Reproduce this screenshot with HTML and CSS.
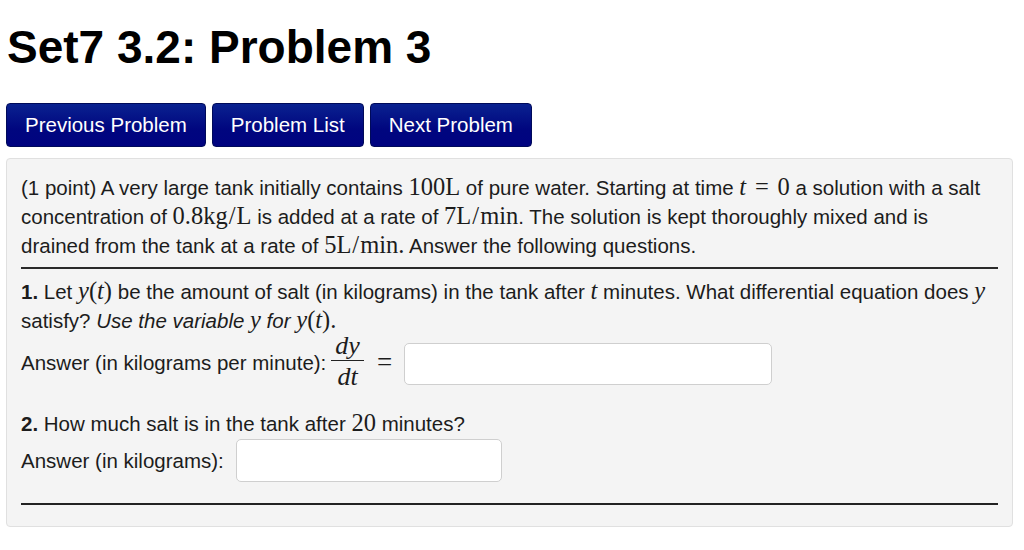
FILE: index.html
```html
<!DOCTYPE html>
<html lang="en">
<head>
<meta charset="utf-8">
<title>Set7 3.2: Problem 3</title>
<link rel="stylesheet" href="styles.css">
</head>
<body>
<div class="page">
  <h1 class="title">Set7 3.2: Problem 3</h1>
  <nav class="nav">
    <a class="btn" href="#">Previous Problem</a>
    <a class="btn" href="#">Problem List</a>
    <a class="btn" href="#">Next Problem</a>
  </nav>
  <div class="problem">
    <p class="intro">(1 point) A very large tank initially contains <span class="m">100L</span> of pure water. Starting at time <span class="m"><i>t</i><span class="rel">=</span>0</span> a solution with a salt concentration of <span class="m">0.8kg<span class="sl">/</span>L</span> is added at a rate of <span class="m">7L<span class="sl">/</span>min</span>. The solution is kept thoroughly mixed and is drained from the tank at a rate of <span class="m">5L<span class="sl">/</span>min.</span> Answer the following questions.</p>
    <hr class="rule">
    <p class="q"><b>1.</b> Let <span class="m"><i>y</i>(<i>t</i>)</span> be the amount of salt (in kilograms) in the tank after <span class="m"><i>t</i></span> minutes. What differential equation does <span class="m"><i>y</i></span> satisfy? <em>Use the variable <span class="m"><i>y</i></span> for </em><span class="m"><i>y</i>(<i>t</i>).</span></p>
    <div class="answer answer-1">
      <span class="label">Answer (in kilograms per minute):</span>
      <span class="frac"><span class="num"><i>dy</i></span><span class="den"><i>dt</i></span></span>
      <span class="eq">=</span>
      <input class="field field-wide" type="text">
    </div>
    <p class="q q2"><b>2.</b> How much salt is in the tank after <span class="m">20</span> minutes?</p>
    <div class="answer answer-2">
      <span class="label">Answer (in kilograms):</span>
      <input class="field field-short" type="text">
    </div>
    <hr class="rule rule-end">
  </div>
</div>
</body>
</html>
```

FILE: styles.css
```css
html, body {
  margin: 0;
  padding: 0;
  background: #ffffff;
}

.page {
  padding: 0 6px;
  font-family: "Liberation Sans", Arial, sans-serif;
  color: #1c1c1c;
}

.title {
  margin: 21px 0 30px 1px;
  font-size: 46px;
  line-height: 52px;
  font-weight: bold;
  color: #000;
}

.nav {
  display: flex;
  gap: 6px;
  margin-bottom: 11px;
}

.btn {
  display: flex;
  align-items: center;
  height: 44px;
  box-sizing: border-box;
  padding: 0 18px;
  border: 1px solid #000a5a;
  border-radius: 4px;
  background: linear-gradient(#0a2290, #00067f 60%, #000380);
  color: #fff;
  font-size: 20.5px;
  text-decoration: none;
}

.problem {
  width: 1007px;
  box-sizing: border-box;
  height: 369px;
  padding: 14px 14px 0 14px;
  background: #f4f4f4;
  border: 1px solid #e0e0e0;
  border-radius: 4px;
  font-size: 20.5px;
  line-height: 29px;
}

.problem p {
  margin: 0;
}

.m {
  font-family: "Liberation Serif", "Times New Roman", serif;
  font-size: 24.5px;
  line-height: 1;
}

.m i {
  font-style: italic;
}

.rel {
  margin: 0 0.36em;
}

.sl {
  margin: 0 1px;
}

.rule {
  border: 0;
  height: 2px;
  background: #2a2a2a;
  margin: 7px 0 8px;
}

.q em {
  font-style: italic;
}

.answer {
  display: flex;
  align-items: center;
}

.answer-1 {
  height: 54px;
  margin-bottom: 20px;
}

.answer-1 .label {
  margin-right: 5px;
}

.frac {
  display: inline-flex;
  flex-direction: column;
  align-items: center;
  font-family: "Liberation Serif", "Times New Roman", serif;
  font-size: 26px;
  line-height: 25px;
  margin-top: -3px;
}

.frac i {
  font-style: italic;
}

.num {
  padding: 0 4px 2px;
  border-bottom: 1.5px solid #222;
}

.den {
  padding: 3px 4px 0;
}

.eq {
  font-family: "Liberation Serif", "Times New Roman", serif;
  font-size: 27px;
  margin: 0 12px 0 13px;
}

.field {
  box-sizing: border-box;
  height: 42px;
  border: 1px solid #cfcfcf;
  border-radius: 5px;
  background: #fff;
  margin: 0;
}

.field-wide {
  width: 368px;
  margin-top: 4px;
}

.field-short {
  width: 266px;
  height: 43px;
  margin-left: 12px;
}

.answer-2 {
  height: 44px;
  margin-top: 0;
}

.rule-end {
  height: 1.5px;
  background: #222;
  margin: 21px 0 0;
}
```
